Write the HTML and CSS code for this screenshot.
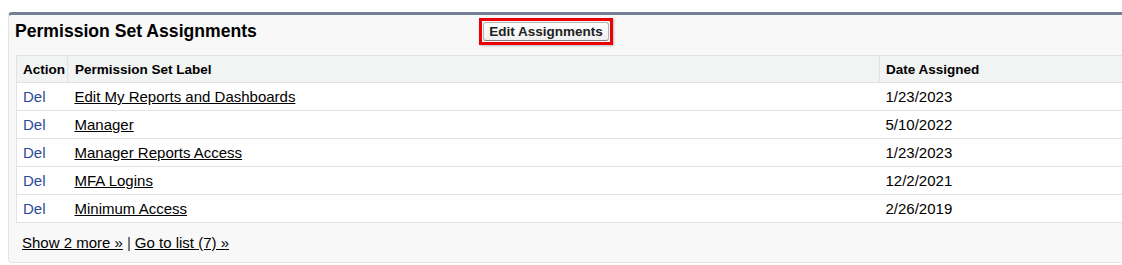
FILE: index.html
```html
<!DOCTYPE html>
<html>
<head>
<meta charset="utf-8">
<link rel="stylesheet" href="styles.css">
</head>
<body>
<div class="panel">
  <div class="pb-header">
    <h3 class="pb-title">Permission Set Assignments</h3>
    <div class="highlight">
      <button class="btn">Edit Assignments</button>
    </div>
  </div>
  <table class="list">
    <thead>
      <tr>
        <th class="c-action">Action</th>
        <th class="c-label">Permission Set Label</th>
        <th class="c-date">Date Assigned</th>
      </tr>
    </thead>
    <tbody>
      <tr><td><a class="action-link" href="#">Del</a></td><td><a class="rec-link" href="#">Edit My Reports and Dashboards</a></td><td>1/23/2023</td></tr>
      <tr><td><a class="action-link" href="#">Del</a></td><td><a class="rec-link" href="#">Manager</a></td><td>5/10/2022</td></tr>
      <tr><td><a class="action-link" href="#">Del</a></td><td><a class="rec-link" href="#">Manager Reports Access</a></td><td>1/23/2023</td></tr>
      <tr><td><a class="action-link" href="#">Del</a></td><td><a class="rec-link" href="#">MFA Logins</a></td><td>12/2/2021</td></tr>
      <tr><td><a class="action-link" href="#">Del</a></td><td><a class="rec-link" href="#">Minimum Access</a></td><td>2/26/2019</td></tr>
    </tbody>
  </table>
  <div class="pb-footer">
    <a class="rec-link" href="#">Show 2 more »</a><span class="sep">|</span><a class="rec-link" href="#">Go to list (7) »</a>
  </div>
</div>
</body>
</html>
```

FILE: styles.css
```css
html, body {
  margin: 0;
  padding: 0;
  background: #ffffff;
  overflow: hidden;
}
body {
  font-family: "Liberation Sans", Arial, sans-serif;
  color: #000;
}
.panel {
  margin: 12px 0 0 8px;
  width: 1114px;
  height: 251px;
  box-sizing: border-box;
  background: #f8f8f8;
  border-top: 3px solid #747e96;
  border-left: 1px solid #e4e4e4;
  border-bottom: 1px solid #e4e4e4;
  border-radius: 4px 0 0 4px;
  overflow: hidden;
}
.pb-header {
  display: flex;
  align-items: center;
  padding: 3px 0 0 6px;
  margin-bottom: 10px;
}
.pb-title {
  margin: 0;
  width: 464px;
  font-size: 17.6px;
  font-weight: bold;
  color: #000;
}
.highlight {
  border: 3px solid #ee0000;
  padding: 1px;
  display: flex;
  box-shadow: 1px 1px 2px rgba(0,0,0,0.25);
}
.btn {
  font-family: "Liberation Sans", Arial, sans-serif;
  font-size: 13.5px;
  font-weight: bold;
  color: #222;
  height: 19px;
  padding: 0 3px;
  line-height: 17px;
  border: 1px solid #b5b5b5;
  border-bottom-color: #7f7f7f;
  border-radius: 3px;
  background: linear-gradient(#ffffff, #efefef);
  width: 126px;
  margin: 0;
}
.list {
  margin-left: 7px;
  width: 1200px;
  border-collapse: collapse;
  background: #ffffff;
  border-top: 1px solid #e0e3e5;
  border-left: 1px solid #e0e3e5;
  font-size: 15px;
}
.list th {
  background: #f2f3f3;
  font-size: 13.5px;
  font-weight: bold;
  text-align: left;
  height: 27px;
  padding: 0 0 0 6px;
  border-bottom: 1px solid #e0e3e5;
  border-right: 1px solid #e0e3e5;
  box-sizing: border-box;
}
.list th.c-action { width: 51px; }
.list th.c-label { width: 812px; padding-left: 7px; }
.list td {
  height: 27px;
  padding: 0 0 0 6px;
  border-bottom: 1px solid #e3e3e3;
  vertical-align: middle;
}
.list td:nth-child(2) { padding-left: 7px; }
.action-link {
  color: #2d4a9a;
  text-decoration: none;
}
.rec-link {
  color: #000;
  text-decoration: underline;
}
.pb-footer {
  padding: 11px 0 0 13px;
  font-size: 15px;
}
.sep {
  color: #333;
  margin: 0 4px;
}
```
